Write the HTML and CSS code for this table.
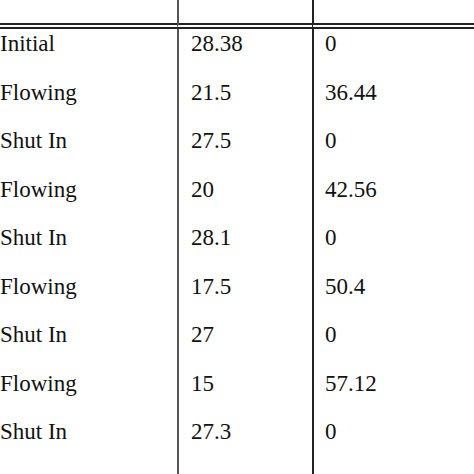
FILE: index.html
```html
<!DOCTYPE html>
<html>
<head>
<meta charset="utf-8">
<link rel="stylesheet" href="styles.css">
</head>
<body>
<div class="table">
  <div class="cell head c1"></div><div class="cell head c2"></div><div class="cell head c3"></div>
  <div class="cell c1">Initial</div><div class="cell c2">28.38</div><div class="cell c3">0</div>
  <div class="cell c1">Flowing</div><div class="cell c2">21.5</div><div class="cell c3">36.44</div>
  <div class="cell c1">Shut In</div><div class="cell c2">27.5</div><div class="cell c3">0</div>
  <div class="cell c1">Flowing</div><div class="cell c2">20</div><div class="cell c3">42.56</div>
  <div class="cell c1">Shut In</div><div class="cell c2">28.1</div><div class="cell c3">0</div>
  <div class="cell c1">Flowing</div><div class="cell c2">17.5</div><div class="cell c3">50.4</div>
  <div class="cell c1">Shut In</div><div class="cell c2">27</div><div class="cell c3">0</div>
  <div class="cell c1">Flowing</div><div class="cell c2">15</div><div class="cell c3">57.12</div>
  <div class="cell c1">Shut In</div><div class="cell c2">27.3</div><div class="cell c3">0</div>
  <div class="cell c1"></div><div class="cell c2"></div><div class="cell c3"></div>
</div>
</body>
</html>
```
FILE: styles.css
```css
html, body {
  margin: 0;
  padding: 0;
  background: #fff;
  overflow: hidden;
}
.table {
  display: grid;
  grid-template-columns: 177px 135px 1fr;
  width: 474px;
  font-family: "Liberation Serif", "Times New Roman", serif;
  font-size: 23px;
  color: #111;
}
.cell {
  height: 48.5px;
  box-sizing: border-box;
  padding-top: 3px;
  line-height: 24px;
  white-space: nowrap;
}
.cell.head {
  height: 29px;
  border-bottom: 6px double #222;
}
.c1 {
  padding-left: 0;
}
.c2 {
  border-left: 2px solid #555;
  padding-left: 12px;
}
.c3 {
  border-left: 2px solid #222;
  padding-left: 11px;
}
```
